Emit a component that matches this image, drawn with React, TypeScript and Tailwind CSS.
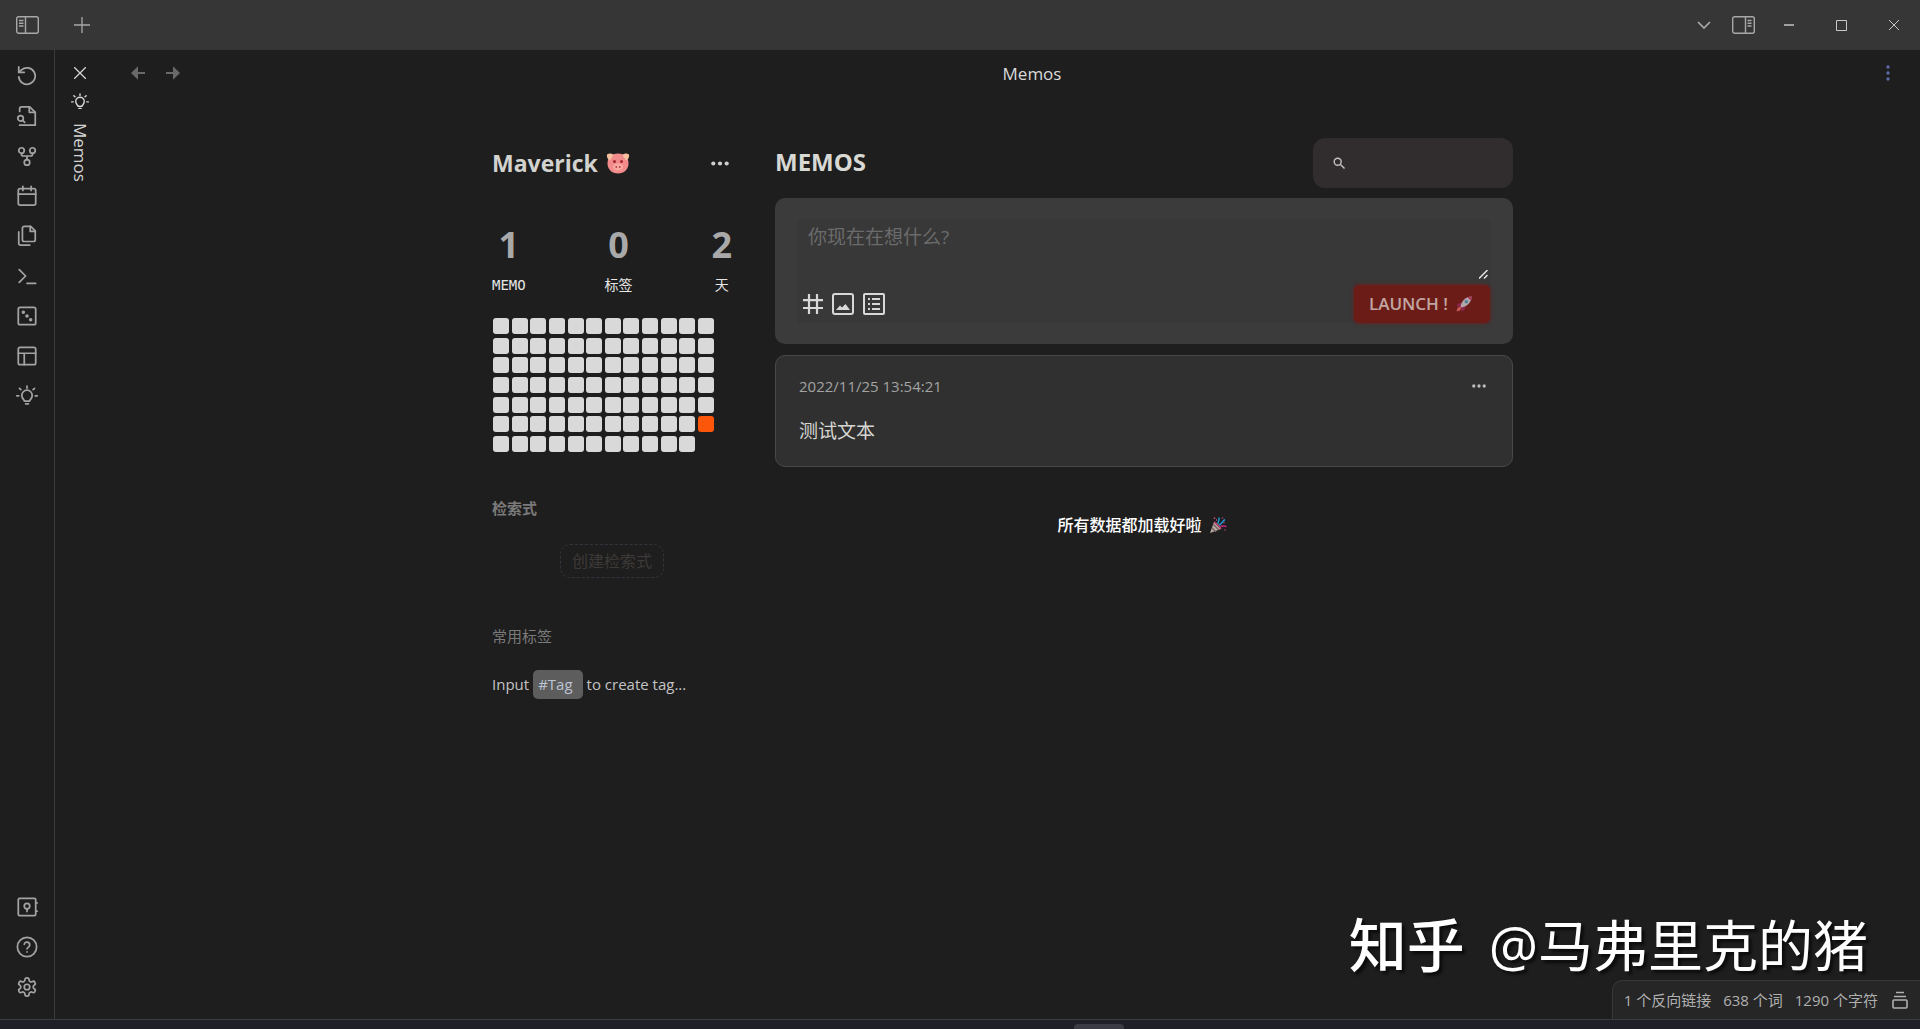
import type { ReactNode } from "react";

type IconProps = {
  children: ReactNode;
  className?: string;
};

function Icon({ children, className = "size-[22px]" }: IconProps) {
  return (
    <svg
      viewBox="0 0 24 24"
      fill="none"
      stroke="currentColor"
      strokeWidth="1.9"
      strokeLinecap="round"
      strokeLinejoin="round"
      className={className}
      aria-hidden="true"
    >
      {children}
    </svg>
  );
}

const bulb = (
  <>
    <path d="M9.2 17.6c-.2-1.600-2.900-3-2.900-6.200a5.700 5.700 0 0 1 11.400 0c0 3.200-2.700 4.600-2.900 6.200z" />
    <path d="M10.500 20.500h3M12 1.300v2M.8 11.800h2.200M21 11.800h2.200M3.800 3.600l1.500 1.500M20.200 3.600l-1.500 1.500" />
  </>
);

const ribbonTop = [
  {
    label: "Revert",
    icon: (
      <>
        <path d="M3 2v6h6" />
        <path d="M3 13a9 9 0 1 0 3-7.700L3 8" />
      </>
    ),
  },
  {
    label: "Quick switcher",
    icon: (
      <>
        <path d="M4 7V4a2 2 0 0 1 2-2h9l6 6v14H4" />
        <path d="M14.500 2v6H21" />
        <circle cx="5" cy="14.500" r="3" />
        <path d="m7.200 16.700 2.300 2.300" />
      </>
    ),
  },
  {
    label: "Graph view",
    icon: (
      <>
        <circle cx="12" cy="19" r="3" />
        <circle cx="6" cy="6" r="3" />
        <circle cx="18" cy="6" r="3" />
        <path d="M18 9v1a2 2 0 0 1-2 2H8a2 2 0 0 1-2-2V9M12 12v4" />
      </>
    ),
  },
  {
    label: "Daily note",
    icon: (
      <>
        <rect x="2.500" y="4" width="19" height="18" rx="2" />
        <path d="M7.500 1.500V6M16.500 1.500V6M2.500 10h19" />
      </>
    ),
  },
  {
    label: "Templates",
    icon: (
      <>
        <path d="M16 1.500H9a2 2 0 0 0-2 2V16a2 2 0 0 0 2 2h10a2 2 0 0 0 2-2V6.500z" />
        <path d="M15.500 1.500V7H21M3 7.500V20a2 2 0 0 0 2 2h10" />
      </>
    ),
  },
  {
    label: "Command palette",
    icon: <path d="m3.500 5 7 7-7 7M12 20H21.500" />,
  },
  {
    label: "Random note",
    icon: (
      <>
        <rect x="2.500" y="2.500" width="19" height="19" rx="2" />
        <g fill="currentColor">
          <circle cx="8" cy="8" r="1" />
          <circle cx="12" cy="12" r="1" />
          <circle cx="16" cy="16" r="1" />
        </g>
      </>
    ),
  },
  {
    label: "Workspaces",
    icon: (
      <>
        <rect x="2.500" y="2.500" width="19" height="19" rx="2" />
        <path d="M2.500 9h19M9 21.500V9" />
      </>
    ),
  },
  { label: "Memos", icon: bulb },
];

const ribbonBottom = [
  {
    label: "Open another vault",
    icon: (
      <>
        <rect x="2.500" y="2.500" width="19" height="19" rx="1.500" />
        <circle cx="12" cy="11" r="3" />
        <path d="M12 14v3M22 7.500h1M22 16.500h1" />
      </>
    ),
  },
  {
    label: "Help",
    icon: (
      <>
        <circle cx="12" cy="12" r="10.500" />
        <path d="M9 9a3 3 0 0 1 5.900 1c0 2-2.900 2.600-2.900 4M12 17.300v.1" />
      </>
    ),
  },
  {
    label: "Settings",
    icon: (
      <>
        <path d="M12.200 2h-.4a2 2 0 0 0-2 2v.2a2 2 0 0 1-1 1.700l-.4.300a2 2 0 0 1-2 0l-.2-.1a2 2 0 0 0-2.700.7l-.2.400a2 2 0 0 0 .7 2.700l.2.100a2 2 0 0 1 1 1.700v.5a2 2 0 0 1-1 1.700l-.2.100a2 2 0 0 0-.7 2.700l.2.400a2 2 0 0 0 2.700.7l.2-.1a2 2 0 0 1 2 0l.4.300a2 2 0 0 1 1 1.700v.2a2 2 0 0 0 2 2h.4a2 2 0 0 0 2-2v-.2a2 2 0 0 1 1-1.700l.4-.3a2 2 0 0 1 2 0l.2.100a2 2 0 0 0 2.700-.7l.2-.4a2 2 0 0 0-.7-2.700l-.2-.1a2 2 0 0 1-1-1.700v-.5a2 2 0 0 1 1-1.700l.2-.1a2 2 0 0 0 .7-2.700l-.2-.4a2 2 0 0 0-2.700-.7l-.2.100a2 2 0 0 1-2 0l-.4-.3a2 2 0 0 1-1-1.700V4a2 2 0 0 0-2-2z" />
        <circle cx="12" cy="12" r="3" />
      </>
    ),
  },
];

const stats = [
  { value: "1", label: "MEMO" },
  { value: "0", label: "标签" },
  { value: "2", label: "天" },
];

const DAYS = 83;
const ACTIVE_DAY = 82;

function SidebarIcon({ flipped = false }: { flipped?: boolean }) {
  return (
    <svg
      viewBox="0 0 23 18"
      fill="none"
      stroke="currentColor"
      strokeWidth="1.400"
      className="h-[18px] w-[23px]"
      aria-hidden="true"
    >
      <rect x=".7" y=".7" width="21.600" height="16.600" rx="2" />
      {flipped ? (
        <path d="M13.500 1v16M15.500 4.500h4M15.500 7.200h4M15.500 10h4" />
      ) : (
        <path d="M9.500 1v16M3 4.500h4.500M3 7.200h4.500M3 10h4.500" />
      )}
    </svg>
  );
}

function TitleBar() {
  return (
    <header className="flex h-[50px] items-center justify-between bg-[#363636] text-[#a8a8a8]">
      <div className="flex items-center gap-[35px] pl-4">
        <button aria-label="Toggle left sidebar">
          <SidebarIcon />
        </button>
        <button aria-label="New tab">
          <svg viewBox="0 0 16 16" stroke="currentColor" strokeWidth="1.300" className="size-4">
            <path d="M8 0v16M0 8h16" />
          </svg>
        </button>
      </div>
      <div className="flex items-center pr-5">
        <button aria-label="Tab list" className="mr-[21px]">
          <svg viewBox="0 0 14 8" fill="none" stroke="currentColor" strokeWidth="1.700" className="h-2 w-3.5">
            <path d="m1 1 6 6 6-6" />
          </svg>
        </button>
        <button aria-label="Toggle right sidebar" className="mr-[29px]">
          <SidebarIcon flipped />
        </button>
        <button aria-label="Minimize" className="mr-[42px]">
          <svg viewBox="0 0 10 2" className="h-0.5 w-2.5">
            <path d="M0 0h10v2H0z" fill="#a0a0a0" />
          </svg>
        </button>
        <button aria-label="Maximize" className="mr-[41px] text-[#c8c8c8]">
          <svg viewBox="0 0 11 11" fill="none" stroke="currentColor" className="size-[11px]">
            <path d="M.5.500h10v10H.5z" />
          </svg>
        </button>
        <button aria-label="Close window" className="text-[#c8c8c8]">
          <svg viewBox="0 0 12 12" stroke="currentColor" className="size-3">
            <path d="m1 1 10 10M11 1 1 11" />
          </svg>
        </button>
      </div>
    </header>
  );
}

function Ribbon() {
  return (
    <nav className="flex w-[55px] shrink-0 flex-col items-center justify-between border-r border-[#3a3a3a] pt-[15px] pb-[21px] text-[#a3a3a3]">
      <div className="flex flex-col gap-[18px]">
        {ribbonTop.map((item) => (
          <button key={item.label} aria-label={item.label}>
            <Icon>{item.icon}</Icon>
          </button>
        ))}
      </div>
      <div className="flex flex-col gap-[18px]">
        {ribbonBottom.map((item) => (
          <button key={item.label} aria-label={item.label}>
            <Icon>{item.icon}</Icon>
          </button>
        ))}
      </div>
    </nav>
  );
}

function TabSpine() {
  return (
    <div className="flex w-[50px] shrink-0 flex-col items-center pt-[17px] text-[#d4d4d4]">
      <button aria-label="Close tab">
        <svg viewBox="0 0 12 12" stroke="currentColor" strokeWidth="1.300" className="size-3">
          <path d="m0 0 12 12M12 0 0 12" />
        </svg>
      </button>
      <Icon className="mt-3.5 size-[18px]">{bulb}</Icon>
      <span className="mt-3 text-[17px] leading-5 [writing-mode:vertical-rl]">Memos</span>
    </div>
  );
}

function ViewHeader() {
  return (
    <div className="flex h-[46px] items-center">
      <div className="flex w-[85px] items-center gap-[21px] pl-[26px] text-[#696969]">
        {["Back", "Forward"].map((label) => (
          <button key={label} aria-label={label} className={label === "Forward" ? "rotate-180" : ""}>
            <svg viewBox="0 0 14 14" fill="currentColor" className="size-3.5">
              <path d="M0 7 7 .2v5.900h7v1.800H7v5.900z" />
            </svg>
          </button>
        ))}
      </div>
      <h1 className="flex-1 pt-0.5 text-center text-[17px] leading-6 text-[#dadada]">Memos</h1>
      <div className="flex w-[46px] justify-start pl-3">
        <button aria-label="More options">
          <svg viewBox="0 0 4 16" fill="#5b6ba8" className="h-4 w-1">
            <circle cx="2" cy="2" r="1.700" />
            <circle cx="2" cy="8" r="1.700" />
            <circle cx="2" cy="14" r="1.700" />
          </svg>
        </button>
      </div>
    </div>
  );
}

function Dots({ className }: { className: string }) {
  return (
    <svg viewBox="0 0 18 5" fill="currentColor" className={className} aria-hidden="true">
      <circle cx="2.300" cy="2.500" r="2.100" />
      <circle cx="9" cy="2.500" r="2.100" />
      <circle cx="15.700" cy="2.500" r="2.100" />
    </svg>
  );
}

function Pig() {
  return (
    <svg viewBox="0 0 24 22" className="h-[22px] w-6" aria-hidden="true">
      <path d="M12 1.500c7 0 10.500 4 10.500 10S18 21.500 12 21.500 1.500 17.500 1.500 11.500 5 1.500 12 1.500z" fill="#f28b8b" />
      <path d="M1 2.500C3.500 1 6 1.500 7.500 3L4 8.500C1.500 7.500.5 5 1 2.500zM23 2.500C20.500 1 18 1.500 16.500 3L20 8.500c2.500-1 3.500-3.500 3-6z" fill="#f5bfa0" />
      <ellipse cx="12" cy="15" rx="5" ry="3.600" fill="#f9a9a0" />
      <circle cx="8.500" cy="9.500" r="1.500" fill="#a3252c" />
      <circle cx="15.500" cy="9.500" r="1.500" fill="#a3252c" />
      <circle cx="10.300" cy="15" r=".9" fill="#b0413f" />
      <circle cx="13.700" cy="15" r=".9" fill="#b0413f" />
    </svg>
  );
}

function Rocket() {
  return (
    <svg viewBox="0 0 16 16" className="size-4" aria-hidden="true">
      <path d="M5 6.500 1.500 8 1 11l4-1zM9.500 11 8 14.500 5 15l1-4z" fill="#8f2557" />
      <path d="M15.500.5c-4-.2-7.500 2-10 6.500l-1 3.500 1 1 3.500-1c4.500-2.500 6.700-6 6.500-10z" fill="#b3a5ab" />
      <path d="M15.500.5c-1.500 0-2.800.2-4 .8l3.200 3.200c.6-1.200.8-2.500.8-4z" fill="#a8375a" />
      <circle cx="10.300" cy="5.700" r="1.700" fill="#4d7f9b" />
      <path d="m4.500 10.500-3 1.500-1 3.500 3.500-1 1.500-3z" fill="#c65a5a" />
    </svg>
  );
}

function Popper() {
  return (
    <svg viewBox="0 0 18 18" className="size-[18px]" fill="none" aria-hidden="true">
      <path d="m1 17 4-11 7 7z" fill="#b9a79c" />
      <path d="m3 12 4 4M4.500 8.500l5.500 5.500" stroke="#6d5b66" strokeWidth="1.200" />
      <path d="M5 6c2.500 1 6 4.500 7 7" stroke="#c23a6a" strokeWidth="1.500" />
      <path d="M9 8c0-2.500 1.500-3.500 1-6.500M10 9c3-.5 3-4 6-5.500" stroke="#1d9bd1" strokeWidth="1.500" />
      <path d="M11.500 10.500c2-1 3.500-.8 6 0" stroke="#c02b83" strokeWidth="1.500" />
      <path d="M5.500 1.500v1.500M13.500 1.500v1M14.500 6.500h1M15.500 14h1M7 4h1" stroke="#d14a8a" strokeWidth="1.500" />
    </svg>
  );
}

function Profile() {
  return (
    <aside className="w-60 shrink-0">
      <div className="flex h-[50px] items-center justify-between">
        <h2 className="flex items-center gap-2 text-[23px] leading-8 font-bold text-[#d2d2ce]">
          Maverick
          <Pig />
        </h2>
        <button aria-label="Profile menu" className="pr-[3px] text-[#cfcfcf]">
          <Dots className="h-[5px] w-[18px]" />
        </button>
      </div>

      <div className="mt-8 flex justify-between">
        {stats.map((stat) => (
          <div key={stat.label} className="flex flex-col items-center">
            <span className="text-4xl leading-[50px] font-bold text-[#a9a9a9]">{stat.value}</span>
            <span className="mt-[5px] font-['DejaVu_Sans_Mono','Noto_Sans_CJK_SC',monospace] text-sm leading-5 text-[#e6e6e6]">
              {stat.label}
            </span>
          </div>
        ))}
      </div>

      <div className="mt-[23px] ml-px grid h-[134px] w-[221px] grid-flow-col grid-rows-[repeat(7,16px)] content-between justify-between">
        {Array.from({ length: DAYS }, (_, i) => (
          <span
            key={i}
            className={`size-4 rounded-[3px] ${i === ACTIVE_DAY ? "bg-[#fb560a]" : "bg-[#d9d9d9]"}`}
          />
        ))}
      </div>

      <h3 className="mt-[46px] text-[15px] leading-5 font-bold text-[#7a7a7a]">检索式</h3>
      <div className="mt-[26px] flex justify-center">
        <button className="h-[34px] rounded-[10px] border border-dashed border-[#34343f] px-[11px] text-base leading-5 text-[#3d3936]">
          创建检索式
        </button>
      </div>

      <h3 className="mt-12 text-[15px] leading-5 text-[#7a7a7a]">常用标签</h3>
      <p className="mt-6 flex items-center text-[15px] leading-[29px] whitespace-nowrap text-[#c4c4c4]">
        Input
        <code className="mx-1 rounded-[5px] bg-[#5d5d5d] pr-2.5 pl-[5px] font-[inherit] text-[#bcc3d2]">
          #Tag
        </code>
        to create tag...
      </p>
    </aside>
  );
}

function Editor() {
  return (
    <form className="mt-2.5 rounded-[10px] bg-[#3b3b3b] px-[23px] py-[21px]">
      <div className="bg-[#383838]">
        <div className="relative">
          <textarea
            aria-label="Memo"
            placeholder="你现在在想什么?"
            className="block h-[62px] w-full resize-none px-2.5 pt-1 text-[19px] leading-7 text-[#d0d0d0] outline-none placeholder:text-[#6b6b6b]"
          />
          <svg
            viewBox="0 0 9 9"
            fill="none"
            stroke="#e5e5e5"
            strokeWidth="1.500"
            className="absolute right-0.5 bottom-0.5 size-[9px]"
            aria-hidden="true"
          >
            <path d="M0 8.500 8.500 0M5 8.500 8.500 5" />
          </svg>
        </div>
        <div className="mt-1 flex items-center justify-between">
          <div className="flex items-center gap-[9px] pl-[5px] text-[#d8d8d8]">
            <button type="button" aria-label="Insert tag">
              <svg viewBox="0 0 20 20" stroke="currentColor" strokeWidth="2.200" className="size-5">
                <path d="M6 0v20M14 0v20M0 6.200h20M0 14h20" />
              </svg>
            </button>
            <button type="button" aria-label="Insert image">
              <svg viewBox="0 0 22 22" fill="none" stroke="currentColor" strokeWidth="2" className="size-[22px]">
                <rect x="1" y="1" width="20" height="20" rx="2" />
                <path d="m4 17 4-4.500 2 2L13.500 11l4.500 6z" fill="currentColor" stroke="none" />
              </svg>
            </button>
            <button type="button" aria-label="Insert list">
              <svg viewBox="0 0 22 22" fill="none" stroke="currentColor" strokeWidth="2" className="size-[22px]">
                <rect x="1" y="1" width="20" height="20" rx="1" />
                <path d="M5 6h2M9 6h8M5 11h2M9 11h8M5 16h2M9 16h8" />
              </svg>
            </button>
          </div>
          <button
            type="submit"
            className="flex h-[38px] items-center gap-2 rounded-[5px] bg-[#6c1c17] pr-[18px] pl-[15px] text-[17px] leading-6 font-semibold text-[#c2a6a3] shadow-[0_0_4px_#6c1c17]"
          >
            LAUNCH !
            <Rocket />
          </button>
        </div>
      </div>
    </form>
  );
}

function MemoCard() {
  return (
    <article className="mt-[11px] rounded-[10px] border border-[#484848] bg-[#303030] px-[23px] pt-[18px] pb-[21px]">
      <div className="flex items-center justify-between">
        <time className="text-[15px] leading-6 text-[#a3a3a3]">2022/11/25 13:54:21</time>
        <button aria-label="Memo menu" className="pr-[3px] text-[#bdbdbd]">
          <Dots className="h-1 w-3.5" />
        </button>
      </div>
      <p className="mt-[19px] text-[19px] leading-7 text-[#d6d6d2]">测试文本</p>
    </article>
  );
}

function StatusBar() {
  return (
    <footer className="flex h-[39px] items-center gap-3 self-end rounded-tl-[10px] border-t border-l border-[#383838] bg-[#262626] pr-3 pl-[11px] text-[15px] leading-5 text-[#b0b0b0]">
      <span>1 个反向链接</span>
      <span>638 个词</span>
      <span>1290 个字符</span>
      <svg viewBox="0 0 16 18" fill="none" stroke="currentColor" strokeWidth="1.600" className="ml-0.5 h-[18px] w-4" aria-hidden="true">
        <rect x="1" y="9" width="14" height="8" rx="1" />
        <path d="M2 5.500h12M4 1.500h8" />
      </svg>
    </footer>
  );
}

export default function App() {
  return (
    <div className="flex min-h-screen flex-col bg-[#1e1e1e] font-['Open_Sans','Noto_Sans_CJK_SC',sans-serif]">
      <TitleBar />
      <div className="flex flex-1">
        <Ribbon />
        <TabSpine />
        <main className="relative flex min-w-0 flex-1 flex-col">
          <ViewHeader />
          <div className="flex-1 pt-[42px] pr-5">
            <div className="mx-auto flex max-w-[1021px] gap-[43px]">
              <Profile />
              <section className="min-w-0 flex-1">
                <div className="flex h-[50px] items-center justify-between">
                  <h2 className="pb-0.5 text-2xl leading-8 font-bold text-[#d8d8d4]">MEMOS</h2>
                  <label className="flex h-full w-[200px] items-center rounded-xl bg-[#312d2e] px-5 text-[#c4c4c4]">
                    <svg viewBox="0 0 12 12" fill="none" stroke="currentColor" strokeWidth="1.400" className="size-3 shrink-0">
                      <circle cx="4.700" cy="4.700" r="3.500" />
                      <path d="m7.500 7.500 4 4" />
                    </svg>
                    <input type="text" aria-label="Search memos" className="ml-2 w-full min-w-0 bg-transparent outline-none" />
                  </label>
                </div>
                <Editor />
                <MemoCard />
                <p className="mt-[46px] flex items-center justify-center gap-[7px] pr-1 text-base leading-6 font-medium text-white">
                  所有数据都加载好啦
                  <Popper />
                </p>
              </section>
            </div>
          </div>
          <StatusBar />
          {/* Signature over the lower right corner of the pane */}
          <div className="pointer-events-none absolute right-[52px] bottom-[34px] flex items-center gap-6 leading-[80px] whitespace-nowrap text-white [text-shadow:3px_3px_3px_#000000a0]">
            <span className="text-[58px] font-medium">知乎</span>
            <span className="text-[55px]">@马弗里克的猪</span>
          </div>
        </main>
      </div>
      <div className="flex h-2.5 justify-center border-t border-[#3c3d42] bg-[#1e1f27]">
        <span className="mt-1 ml-[277px] h-[5px] w-[50px] rounded-t bg-[#3a3b44]" />
      </div>
    </div>
  );
}
